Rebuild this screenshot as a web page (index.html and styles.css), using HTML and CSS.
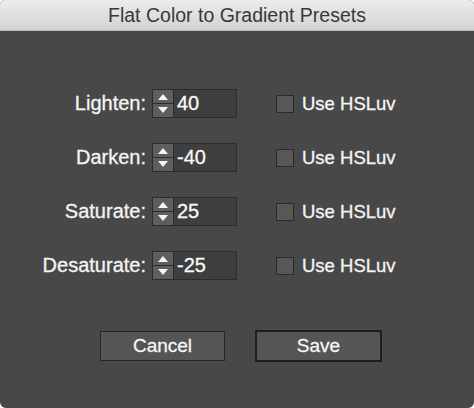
FILE: index.html
```html
<!DOCTYPE html>
<html lang="en">
<head>
    <meta charset="UTF-8">
    <meta name="viewport" content="width=device-width, initial-scale=1.0">
    <title>Flat Color to Gradient Presets</title>
    <link rel="stylesheet" href="styles.css">
</head>
<body>
    <div class="dialog">
        <div class="titlebar">Flat Color to Gradient Presets</div>
        <div class="content">
            <div class="fields">
                <div class="label">Lighten:</div>
                <div class="spinner">
                    <div class="stepper"><span class="up"></span><span class="down"></span></div>
                    <div class="value">40</div>
                </div>
                <label class="check"><span class="box"></span>Use HSLuv</label>

                <div class="label">Darken:</div>
                <div class="spinner">
                    <div class="stepper"><span class="up"></span><span class="down"></span></div>
                    <div class="value">-40</div>
                </div>
                <label class="check"><span class="box"></span>Use HSLuv</label>

                <div class="label">Saturate:</div>
                <div class="spinner">
                    <div class="stepper"><span class="up"></span><span class="down"></span></div>
                    <div class="value">25</div>
                </div>
                <label class="check"><span class="box"></span>Use HSLuv</label>

                <div class="label">Desaturate:</div>
                <div class="spinner">
                    <div class="stepper"><span class="up"></span><span class="down"></span></div>
                    <div class="value">-25</div>
                </div>
                <label class="check"><span class="box"></span>Use HSLuv</label>
            </div>
            <div class="buttons">
                <button class="btn cancel">Cancel</button>
                <button class="btn save">Save</button>
            </div>
        </div>
    </div>
</body>
</html>
```

FILE: styles.css
```css
body {
    margin: 0;
    background: #ffffff;
    font-family: "Liberation Sans", Arial, sans-serif;
}
.dialog {
    width: 474px;
    height: 408px;
    background: #484848;
    border-radius: 5px 5px 6px 6px;
    overflow: hidden;
}
.titlebar {
    height: 31px;
    line-height: 31px;
    text-align: center;
    font-size: 19.5px;
    color: #383838;
    background: linear-gradient(to bottom, #ececec, #d3d3d3);
    border-bottom: 1px solid #bcbcbc;
    box-sizing: border-box;
}
.content {
    padding-top: 58px;
}
.fields {
    display: grid;
    grid-template-columns: 146px 85px auto;
    column-gap: 6px;
    row-gap: 25px;
    align-items: center;
}
.label {
    text-align: right;
    color: #f4f4f4;
    font-size: 20px;
    -webkit-text-stroke: 0.3px #f4f4f4;
}
.spinner {
    display: flex;
    height: 29px;
    width: 85px;
    border: 1px solid #2c2c2c;
    box-sizing: border-box;
    background: #3e3e3e;
}
.stepper {
    display: flex;
    flex-direction: column;
    width: 20px;
    border-right: 1px solid #2c2c2c;
}
.stepper span {
    flex: 1;
    background: #5e5e5e;
    position: relative;
}
.stepper .up {
    border-bottom: 1px solid #2c2c2c;
}
.stepper span::after {
    content: "";
    position: absolute;
    left: 5px;
    top: 4px;
    border-left: 5px solid transparent;
    border-right: 5px solid transparent;
}
.stepper .up::after {
    border-bottom: 6px solid #f4f4f4;
}
.stepper .down::after {
    top: 3px;
    border-top: 6px solid #f4f4f4;
}
.value {
    flex: 1;
    color: #f8f8f8;
    font-size: 20px;
    line-height: 27px;
    padding-left: 3px;
    -webkit-text-stroke: 0.3px #f8f8f8;
}
.check {
    display: flex;
    align-items: center;
    gap: 8px;
    margin-left: 33px;
    color: #f4f4f4;
    font-size: 18.5px;
    -webkit-text-stroke: 0.3px #f4f4f4;
}
.box {
    width: 16px;
    height: 16px;
    border: 1px solid #2a2a2a;
    background: #575757;
}
.buttons {
    display: flex;
    gap: 30px;
    padding-left: 100px;
    margin-top: 50px;
    align-items: center;
}
.btn {
    font-family: "Liberation Sans", Arial, sans-serif;
    font-size: 19px;
    color: #f6f6f6;
    background: #555555;
    border: 1px solid #262626;
    height: 30px;
    padding: 0;
    -webkit-text-stroke: 0.3px #f6f6f6;
}
.cancel {
    width: 125px;
}
.save {
    width: 127px;
    height: 32px;
    border: 2px solid #1f1f1f;
}
```
